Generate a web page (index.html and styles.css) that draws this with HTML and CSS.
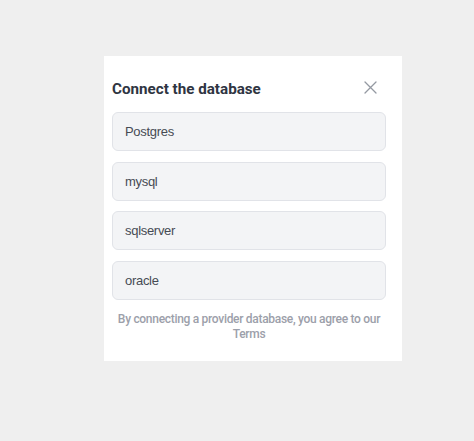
FILE: index.html
```
<!DOCTYPE html>
<html>
<head>
<meta charset="utf-8">
<link rel="stylesheet" href="styles.css">
</head>
<body>
<div class="card">
  <div class="header">
    <h2 class="title">Connect the database</h2>
    <button class="close" aria-label="Close">
      <svg width="13" height="13" viewBox="0 0 13 13"><path d="M1 1L12 12M12 1L1 12" stroke="#9499a2" stroke-width="1.3" stroke-linecap="round"/></svg>
    </button>
  </div>
  <div class="list">
    <div class="option">Postgres</div>
    <div class="option">mysql</div>
    <div class="option">sqlserver</div>
    <div class="option">oracle</div>
  </div>
  <p class="footer">By connecting a provider database, you agree to our<br>Terms</p>
</div>
</body>
</html>
```
FILE: styles.css
```
html, body {
  margin: 0;
  padding: 0;
}
body {
  background: #efefef;
  width: 474px;
  height: 441px;
  padding: 56px 0 0 104px;
  box-sizing: border-box;
  font-family: Roboto, "Liberation Sans", sans-serif;
}
.card {
  width: 298px;
  height: 305px;
  box-sizing: border-box;
  background: #ffffff;
  padding: 21px 16px 0 8px;
}
.header {
  display: flex;
  align-items: center;
  justify-content: space-between;
  height: 24px;
}
.title {
  margin: 0;
  font-size: 15.2px;
  font-weight: 700;
  line-height: 24px;
  color: #2f3542;
}
.close {
  width: 24px;
  height: 24px;
  padding: 0;
  margin: -4px 4px 0 0;
  border: none;
  background: none;
  display: flex;
  align-items: center;
  justify-content: center;
}
.list {
  display: flex;
  flex-direction: column;
  gap: 10.5px;
  margin-top: 11px;
}
.option {
  height: 39px;
  box-sizing: border-box;
  border: 1px solid #e1e3e8;
  border-radius: 6px;
  background: #f3f4f6;
  padding: 0 12px;
  display: flex;
  align-items: center;
  font-family: "Liberation Sans", Arial, sans-serif;
  font-size: 13px;
  letter-spacing: -0.3px;
  color: #464b54;
}
.footer {
  margin: 12px 0 0 0;
  text-align: center;
  font-size: 12px;
  font-weight: 500;
  letter-spacing: -0.3px;
  line-height: 15px;
  color: #9ca0aa;
  white-space: nowrap;
}
```
